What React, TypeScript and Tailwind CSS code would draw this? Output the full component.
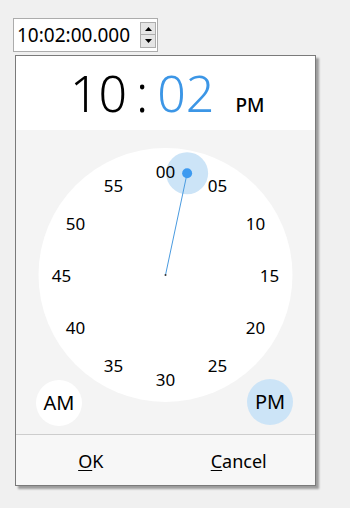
import React from 'react';

const FONT = { fontFamily: '"Noto Sans", "Open Sans", sans-serif' };

const CX = 149.5;
const CY = 145;
const LABEL_R = 104;
const FACE_R = 127;

const minutes = ['00', '05', '10', '15', '20', '25', '30', '35', '40', '45', '50', '55'];

function ClockFace() {
    const sel = (2 / 60) * Math.PI * 2;
    const dx = CX + LABEL_R * Math.sin(sel);
    const dy = CY - LABEL_R * Math.cos(sel);

    return (
        <div className="relative h-[304px] bg-[#f4f4f4]">
            <svg className="absolute inset-0" width="299" height="304">
                <circle cx={CX} cy={CY} r={FACE_R} fill="#ffffff" />
                <circle cx={dx} cy={dy} r={21} fill="#cce4f7" />
                <line x1={CX} y1={CY} x2={dx} y2={dy} stroke="#4a9be0" strokeWidth="1" />
                <circle cx={dx} cy={dy} r={5} fill="#3d9af0" />
                <circle cx={CX} cy={CY} r={1} fill="#333" />
            </svg>
            {minutes.map((m, i) => {
                const a = (i / 12) * Math.PI * 2;
                return (
                    <span
                        key={m}
                        className="absolute -translate-x-1/2 -translate-y-1/2 text-[17px] leading-none text-black"
                        style={{ left: CX + LABEL_R * Math.sin(a), top: CY - LABEL_R * Math.cos(a) }}
                    >
                        {m}
                    </span>
                );
            })}
            <div className="absolute left-[20px] top-[250px] w-[46px] h-[46px] rounded-full bg-white flex items-center justify-center text-[20px] text-black">
                AM
            </div>
            <div className="absolute left-[231px] top-[249px] w-[46px] h-[46px] rounded-full bg-[#cce4f7] flex items-center justify-center text-[20px] text-black">
                PM
            </div>
        </div>
    );
}

export default function App() {
    return (
        <div className="w-full h-screen bg-[#f0f0f0] pt-[18px]" style={FONT}>
            {/* time field */}
            <div className="ml-[13px] w-[145px] h-[34px] border border-[#acacac] bg-white flex items-center">
                <span className="pl-[3px] text-[19px] text-black flex-1 whitespace-nowrap">10:02:00.000</span>
                <div className="flex flex-col mr-[1px]">
                    <div className="w-[16px] h-[13px] bg-[#e5e5e5] border border-[#adadad] flex items-center justify-center">
                        <svg width="7" height="4"><path d="M0 4 L3.5 0 L7 4 Z" fill="#000" /></svg>
                    </div>
                    <div className="w-[16px] h-[13px] bg-[#e5e5e5] border border-[#adadad] border-t-0 flex items-center justify-center">
                        <svg width="7" height="4"><path d="M0 0 L3.5 4 L7 0 Z" fill="#000" /></svg>
                    </div>
                </div>
            </div>

            {/* popup */}
            <div className="ml-[15px] mt-[3px] w-[301px] h-[431px] border border-[#7a7a7a] bg-white shadow-[3px_3px_2px_rgba(0,0,0,0.35)] flex flex-col">
                <div className="h-[74px] bg-white flex items-baseline pl-[54px] pt-[12px]">
                    <span className="text-[50px] font-light text-black leading-none">10</span>
                    <span className="text-[50px] font-light text-black leading-none ml-[9px]">:</span>
                    <span className="text-[50px] font-light text-[#3c96e6] leading-none ml-[9px]">02</span>
                    <span className="text-[19px] font-medium text-black leading-none ml-[21px]">PM</span>
                </div>
                <ClockFace />
                <div className="flex-1 border-t border-[#cdcdcd] bg-[#f7f7f7] grid grid-cols-2 items-center pt-[2px]">
                    <span className="text-center text-[18px] text-black"><span className="underline underline-offset-2">O</span>K</span>
                    <span className="text-center text-[18px] text-black pr-[3px]"><span className="underline underline-offset-2">C</span>ancel</span>
                </div>
            </div>
        </div>
    );
}
